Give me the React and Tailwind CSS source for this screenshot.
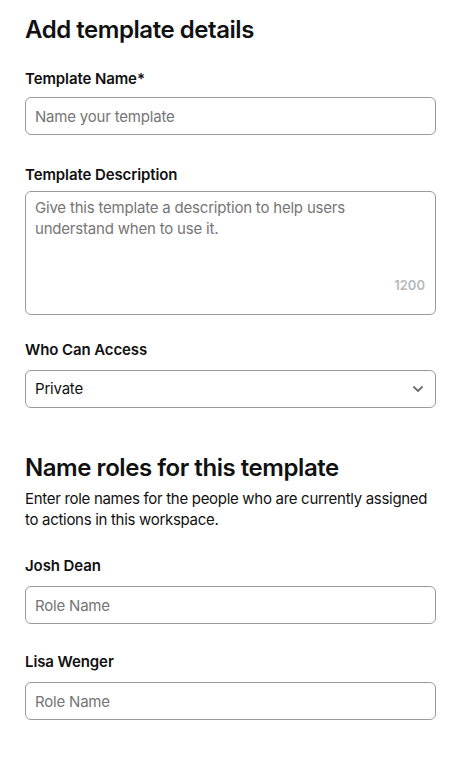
import React, { useState } from "react";

const font = { fontFamily: "Inter, 'Noto Sans', sans-serif" };

const fieldClass =
  "block w-full h-[38px] px-[9px] rounded-[6px] border border-[#9a9a9a] bg-white text-[15px] tracking-[-0.2px] text-[#111] placeholder:text-[#757575] focus:outline-none";

const Label = ({ children, className = "" }) => (
  <label className={`block text-[15px] leading-[20px] font-semibold tracking-[-0.1px] text-[#111] ${className}`}>
    {children}
  </label>
);

const App = () => {
  const [form, setForm] = useState({
    name: "",
    description: "",
    access: "private",
    roles: { josh: "", lisa: "" },
  });

  function changeHandler(event) {
    const { name, value } = event.target;
    setForm((prev) => ({ ...prev, [name]: value }));
  }

  function roleHandler(event) {
    const { name, value } = event.target;
    setForm((prev) => ({ ...prev, roles: { ...prev.roles, [name]: value } }));
  }

  return (
    <div className="min-h-screen bg-white pl-[25px] pr-[38px] pt-[14px] pb-10" style={font}>
      <h1 className="text-[24px] leading-[32px] font-semibold text-[#111] tracking-[-0.45px]">
        Add template details
      </h1>

      <Label className="mt-[23px]">Template Name*</Label>
      <input
        type="text"
        name="name"
        value={form.name}
        onChange={changeHandler}
        placeholder="Name your template"
        className={`${fieldClass} mt-[8px]`}
      />

      <Label className="mt-[30px]">Template Description</Label>
      <div className="relative mt-[6px]">
        <textarea
          name="description"
          value={form.description}
          onChange={changeHandler}
          placeholder="Give this template a description to help users understand when to use it."
          className="block w-full h-[124px] resize-none px-[9px] pt-[5px] pr-[70px] rounded-[6px] border border-[#9a9a9a] bg-white text-[15px] leading-[21px] tracking-[-0.2px] text-[#111] placeholder:text-[#757575] focus:outline-none"
        />
        <span className="absolute right-[11px] bottom-[22px] text-[13px] leading-[16px] font-semibold text-[#b5b9be]">
          1200
        </span>
      </div>

      <Label className="mt-[25px]">Who Can Access</Label>
      <div className="relative mt-[10px]">
        <select
          name="access"
          value={form.access}
          onChange={changeHandler}
          className={`${fieldClass} appearance-none`}
        >
          <option value="private">Private</option>
          <option value="workspace">Workspace</option>
        </select>
        <svg
          className="pointer-events-none absolute right-[13px] top-1/2 -translate-y-1/2"
          width="10"
          height="6"
          viewBox="0 0 10 6"
          fill="none"
        >
          <path d="M1 1l4 4 4-4" stroke="#6f6f6f" strokeWidth="1.8" strokeLinecap="round" strokeLinejoin="round" />
        </svg>
      </div>

      <h2 className="mt-[44px] text-[24px] leading-[32px] font-semibold text-[#111] tracking-[-0.45px]">
        Name roles for this template
      </h2>
      <p className="mt-[4px] text-[15px] leading-[21px] tracking-[-0.3px] text-[#111]">
        Enter role names for the people who are currently assigned to actions in this workspace.
      </p>

      <Label className="mt-[26px]">Josh Dean</Label>
      <input
        type="text"
        name="josh"
        value={form.roles.josh}
        onChange={roleHandler}
        placeholder="Role Name"
        className={`${fieldClass} mt-[10px]`}
      />

      <Label className="mt-[28px]">Lisa Wenger</Label>
      <input
        type="text"
        name="lisa"
        value={form.roles.lisa}
        onChange={roleHandler}
        placeholder="Role Name"
        className={`${fieldClass} mt-[10px]`}
      />
    </div>
  );
};

export default App;
